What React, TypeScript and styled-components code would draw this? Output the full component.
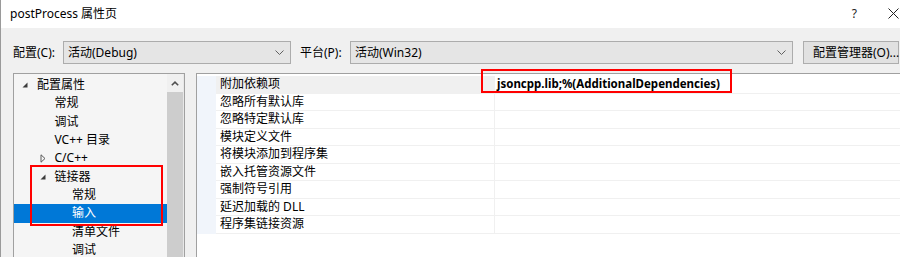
import React from 'react'
import styled, { createGlobalStyle } from 'styled-components'

const GlobalStyle = createGlobalStyle`
  html, body {
    margin: 0;
    padding: 0;
    background: #ffffff;
  }
  body {
    font-family: 'Noto Sans', 'Noto Sans CJK SC', sans-serif;
    font-size: 12px;
    color: #000000;
  }
`

type TreeItem = {
  level: number
  label: string
  arrow?: 'open' | 'closed'
  selected?: boolean
}

const treeItems: TreeItem[] = [
  { level: 0, label: '配置属性', arrow: 'open' },
  { level: 1, label: '常规' },
  { level: 1, label: '调试' },
  { level: 1, label: 'VC++ 目录' },
  { level: 1, label: 'C/C++', arrow: 'closed' },
  { level: 1, label: '链接器', arrow: 'open' },
  { level: 2, label: '常规' },
  { level: 2, label: '输入', selected: true },
  { level: 2, label: '清单文件' },
  { level: 2, label: '调试' },
]

const properties: { name: string; value?: string }[] = [
  { name: '附加依赖项', value: 'jsoncpp.lib;%(AdditionalDependencies)' },
  { name: '忽略所有默认库' },
  { name: '忽略特定默认库' },
  { name: '模块定义文件' },
  { name: '将模块添加到程序集' },
  { name: '嵌入托管资源文件' },
  { name: '强制符号引用' },
  { name: '延迟加载的 DLL' },
  { name: '程序集链接资源' },
]

const Chevron = () => (
  <svg width="9" height="5" viewBox="0 0 9 5">
    <polyline points="0.5,0.5 4.5,4.5 8.5,0.5" fill="none" stroke="#606060" strokeWidth="1" />
  </svg>
)

const Arrow = ({ kind }: { kind: 'open' | 'closed' }) =>
  kind === 'open' ? (
    <svg width="6" height="6" viewBox="0 0 6 6">
      <polygon points="5.5,0.5 5.5,5.5 0.5,5.5" fill="#3c3c3c" />
    </svg>
  ) : (
    <svg width="6" height="9" viewBox="0 0 6 9">
      <polygon points="1,0.8 5,4.5 1,8.2" fill="none" stroke="#5a5a5a" strokeWidth="1" />
    </svg>
  )

const App = () => {
  return (
    <>
      <GlobalStyle />
      <StyledWindow>
        <StyledTitleBar>
          <StyledTitle>postProcess 属性页</StyledTitle>
          <StyledCaptionButtons>
            <StyledHelp>?</StyledHelp>
            <svg width="11" height="11" viewBox="0 0 11 11">
              <path d="M0.5 0.5 L10.5 10.5 M10.5 0.5 L0.5 10.5" stroke="#222" strokeWidth="1" />
            </svg>
          </StyledCaptionButtons>
        </StyledTitleBar>

        <StyledToolbar>
          <StyledLabel>配置(C):</StyledLabel>
          <StyledCombo $width={228}>
            <span>活动(Debug)</span>
            <Chevron />
          </StyledCombo>
          <StyledLabel $gap={9}>平台(P):</StyledLabel>
          <StyledCombo $width={443}>
            <span>活动(Win32)</span>
            <Chevron />
          </StyledCombo>
          <StyledButton>配置管理器(O)...</StyledButton>
        </StyledToolbar>

        <StyledBody>
          <StyledTreePanel>
            <StyledTreeList>
              {treeItems.map((item, i) => (
                <StyledTreeRow key={i} $level={item.level} $selected={!!item.selected}>
                  <StyledArrowBox>{item.arrow && <Arrow kind={item.arrow} />}</StyledArrowBox>
                  <span>{item.label}</span>
                </StyledTreeRow>
              ))}
            </StyledTreeList>
            <StyledScrollBar>
              <StyledScrollButton>
                <svg width="8" height="5" viewBox="0 0 8 5">
                  <polyline points="0.8,4.3 4,1.2 7.2,4.3" fill="none" stroke="#505050" strokeWidth="1.6" />
                </svg>
              </StyledScrollButton>
              <StyledThumb />
            </StyledScrollBar>
          </StyledTreePanel>

          <StyledGridPanel>
            {properties.map((p, i) => (
              <StyledGridRow key={i}>
                <StyledMargin />
                <StyledNameCell $active={i === 0}>{p.name}</StyledNameCell>
                <StyledValueCell>{p.value}</StyledValueCell>
              </StyledGridRow>
            ))}
          </StyledGridPanel>
        </StyledBody>

        <StyledMark style={{ left: 29, top: 165, width: 133, height: 61 }} />
        <StyledMark style={{ left: 480, top: 69, width: 251, height: 24 }} />
      </StyledWindow>
    </>
  )
}

const StyledWindow = styled.div`
  position: relative;
  width: 900px;
  height: 257px;
  overflow: hidden;
  box-sizing: border-box;
  border-left: 1px solid #9a9a9a;
  background: #f0f0f0;
  display: flex;
  flex-direction: column;
`

const StyledTitleBar = styled.div`
  height: 28px;
  flex-shrink: 0;
  background: #ffffff;
  display: flex;
  align-items: center;
  justify-content: space-between;
  padding-left: 9px;
`

const StyledTitle = styled.div`
  font-size: 12px;
  line-height: 16px;
  color: #000;
`

const StyledCaptionButtons = styled.div`
  display: flex;
  align-items: center;
  gap: 31px;
  margin-right: 1px;
  margin-top: -1px;
`

const StyledHelp = styled.span`
  font-family: 'Noto Sans', sans-serif;
  font-size: 12px;
  color: #222;
`

const StyledToolbar = styled.div`
  display: flex;
  align-items: center;
  padding: 13px 0 0 12px;
  height: 23px;
  flex-shrink: 0;
`

const StyledLabel = styled.div<{ $gap?: number }>`
  width: 50px;
  margin-left: ${(p) => p.$gap ?? 0}px;
  white-space: nowrap;
  line-height: 16px;
`

const StyledCombo = styled.div<{ $width: number }>`
  box-sizing: border-box;
  width: ${(p) => p.$width}px;
  height: 23px;
  background: #e5e5e5;
  border: 1px solid #acacac;
  display: flex;
  align-items: center;
  justify-content: space-between;
  padding: 0 6px 0 4px;
  line-height: 16px;
`

const StyledButton = styled.div`
  box-sizing: border-box;
  margin-left: 10px;
  width: 96px;
  height: 23px;
  background: #e1e1e1;
  border: 1px solid #adadad;
  display: flex;
  align-items: center;
  padding-left: 9px;
  white-space: nowrap;
  line-height: 16px;
`

const StyledBody = styled.div`
  display: flex;
  gap: 11px;
  padding: 9px 0 0 12px;
  flex: 1;
  min-height: 0;
`

const StyledTreePanel = styled.div`
  box-sizing: border-box;
  width: 172px;
  height: 200px;
  border: 1px solid #a0a0a0;
  background: #f5f5f5;
  display: flex;
  flex-shrink: 0;
`

const StyledTreeList = styled.div`
  flex: 1;
  padding-top: 2px;
`

const StyledTreeRow = styled.div<{ $level: number; $selected: boolean }>`
  height: 18.33px;
  display: flex;
  align-items: center;
  padding-left: ${(p) => 6 + p.$level * 17.5}px;
  background: ${(p) => (p.$selected ? '#0078d7' : 'transparent')};
  color: ${(p) => (p.$selected ? '#ffffff' : '#000000')};
  line-height: 16px;
  white-space: nowrap;
`

const StyledArrowBox = styled.div`
  width: 17px;
  padding-right: 7px;
  box-sizing: border-box;
  display: flex;
  justify-content: center;
  align-items: center;
`

const StyledScrollBar = styled.div`
  width: 16px;
  display: flex;
  flex-direction: column;
  background: #f0f0f0;
  border-right: 1px solid #e8e8e8;
`

const StyledScrollButton = styled.div`
  height: 17px;
  display: flex;
  align-items: center;
  justify-content: center;
  padding-top: 2px;
  box-sizing: border-box;
`

const StyledThumb = styled.div`
  flex: 1;
  background: #cdcdcd;
  margin-top: 1px;
`

const StyledGridPanel = styled.div`
  box-sizing: border-box;
  width: 720px;
  height: 200px;
  border: 1px solid #a0a0a0;
  background: #ffffff;
  padding-top: 2px;
  flex-shrink: 0;
`

const StyledGridRow = styled.div`
  display: flex;
  height: 17.5px;
`

const StyledMargin = styled.div`
  width: 19px;
  background: #f1f5fb;
`

const StyledNameCell = styled.div<{ $active: boolean }>`
  box-sizing: border-box;
  width: 279px;
  padding-left: 4px;
  background: ${(p) => (p.$active ? '#f0f0f0' : '#ffffff')};
  border-right: 1px solid #f0f0f0;
  border-bottom: 1px solid #f0f0f0;
  display: flex;
  align-items: center;
  line-height: 16px;
  white-space: nowrap;
`

const StyledValueCell = styled.div`
  flex: 1;
  box-sizing: border-box;
  padding-left: 2px;
  border-bottom: 1px solid #f0f0f0;
  display: flex;
  align-items: center;
  font-size: 11.5px;
  font-weight: bold;
  line-height: 16px;
  white-space: nowrap;
`

const StyledMark = styled.div`
  position: absolute;
  box-sizing: border-box;
  border: 2.5px solid #ff0000;
  pointer-events: none;
`

export default App
